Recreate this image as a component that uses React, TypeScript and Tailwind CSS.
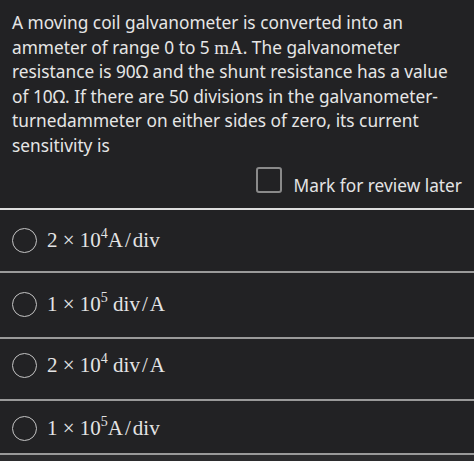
import React from 'react';

const serif = { fontFamily: '"Liberation Serif", "DejaVu Serif", serif' };

function Radio() {
  return <span className="block h-[25px] w-[25px] shrink-0 rounded-full border-[1.5px] border-[#c4c4c4]" />;
}

function Option({ lead, exp, unit, gap, rowClass }: { lead: string; exp: string; unit: string; gap?: boolean; rowClass: string }) {
  const [a, b] = unit.split('/');
  return (
    <div className={`flex items-start border-b-2 border-[#9a9a9a] pl-3 ${rowClass}`}>
      <Radio />
      <div className="ml-[10px] text-[21px] leading-[25px] text-[#e4e4e4]" style={serif}>
        {lead}
        <sup className="relative -top-[9px] text-[14px]">{exp}</sup>
        {gap ? ' ' : ''}
        {a}
        <span className="mx-[2px]">/</span>
        {b}
      </div>
    </div>
  );
}

export default function App() {
  return (
    <div className="h-[461px] w-[474px] overflow-hidden bg-[#222224] text-[#e6e6e6]" style={{ fontFamily: '"Noto Sans", "Open Sans", sans-serif' }}>
      <p className="px-3 pt-[11px] text-[17.3px] leading-[24.5px]">
        A moving coil galvanometer is converted into an ammeter of range 0 to 5 <span style={serif} className="text-[19px] leading-[20px]">mA</span>. The galvanometer resistance is 90Ω and the shunt resistance has a value of 10Ω. If there are 50 divisions in the galvanometer-turnedammeter on either sides of zero, its current sensitivity is
      </p>

      <div className="flex h-[52px] items-start justify-end border-b-2 border-[#dedede] pr-3 pt-[9px]">
        <span className="block h-[26px] w-[26px] rounded-[3px] border-2 border-[#8a8a8a]" />
        <span className="ml-[12px] mt-[7px] text-[17.3px] leading-[24px] text-[#e4e4e4]">Mark for review later</span>
      </div>

      <Option lead="2 × 10" exp="4" unit="A/div" rowClass="h-[63px] pt-[18px]" />
      <Option lead="1 × 10" exp="5" unit="div/A" gap rowClass="h-[66px] pt-[19px]" />
      <Option lead="2 × 10" exp="4" unit="div/A" gap rowClass="h-[62px] pt-[14px]" />
      <Option lead="1 × 10" exp="5" unit="A/div" rowClass="h-[54px] pt-[15px]" />
      <div className="h-[10px] bg-[#2b2b2d]" />
    </div>
  );
}
